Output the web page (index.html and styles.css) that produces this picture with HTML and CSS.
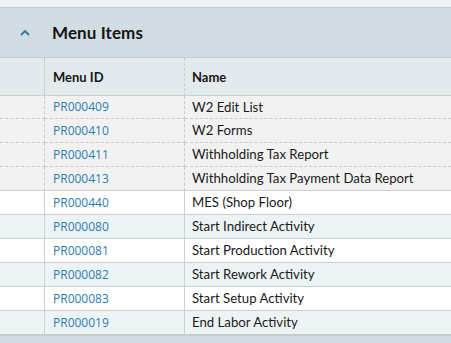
FILE: index.html
```html
<!DOCTYPE html>
<html>
<head>
<meta charset="utf-8">
<link rel="stylesheet" href="styles.css">
</head>
<body>
<div class="topstrip"></div>
<div class="band">
  <svg class="chev" width="12" height="8" viewBox="0 0 12 8"><path d="M2 6 L6 2 L10 6" fill="none" stroke="#2b7aa6" stroke-width="1.8"/></svg>
  <span class="title">Menu Items</span>
</div>
<table class="grid">
  <colgroup><col class="c0"><col class="c1"><col class="c2"></colgroup>
  <thead>
    <tr><th class="sel"></th><th class="idh">Menu ID</th><th class="nameh">Name</th></tr>
  </thead>
  <tbody>
    <tr class="dash first"><td class="sel"></td><td class="id">PR000409</td><td>W2 Edit List</td></tr>
    <tr class="dash"><td class="sel"></td><td class="id">PR000410</td><td>W2 Forms</td></tr>
    <tr class="dash"><td class="sel"></td><td class="id">PR000411</td><td>Withholding Tax Report</td></tr>
    <tr class="dash last"><td class="sel"></td><td class="id">PR000413</td><td>Withholding Tax Payment Data Report</td></tr>
    <tr class="w"><td class="sel"></td><td class="id">PR000440</td><td>MES (Shop Floor)</td></tr>
    <tr class="b"><td class="sel"></td><td class="id">PR000080</td><td>Start Indirect Activity</td></tr>
    <tr class="w"><td class="sel"></td><td class="id">PR000081</td><td>Start Production Activity</td></tr>
    <tr class="b"><td class="sel"></td><td class="id">PR000082</td><td>Start Rework Activity</td></tr>
    <tr class="w"><td class="sel"></td><td class="id">PR000083</td><td>Start Setup Activity</td></tr>
    <tr class="b"><td class="sel"></td><td class="id">PR000019</td><td>End Labor Activity</td></tr>
  </tbody>
</table>
<div class="bottom"></div>
</body>
</html>
```
FILE: styles.css
```css
html, body {
  margin: 0;
  padding: 0;
  background: #d1dde2;
  font-family: Lato, "Noto Sans", sans-serif;
  color: #1b1b1b;
  overflow: hidden;
}
.topstrip {
  height: 7px;
  background: #eef2f5;
  border-bottom: 1px solid #c6cfd3;
}
.band {
  height: 49px;
  background: #d1dde2;
  border-bottom: 1px solid #c3ccd0;
  display: flex;
  align-items: center;
}
.chev {
  margin-left: 19px;
  margin-right: 21px;
  margin-top: 1px;
}
.title {
  font-size: 17px;
  font-weight: 700;
  color: #141414;
  letter-spacing: 0.1px;
}
.grid {
  width: 451px;
  border-collapse: separate;
  border-spacing: 0;
  table-layout: fixed;
  font-size: 13.2px;
}
.c0 { width: 45px; }
.c1 { width: 140px; }
th {
  height: 38px;
  padding: 1px 0 0 8px;
  text-align: left;
  font-weight: 700;
  font-size: 13px;
  background: #e3eaee;
  border-bottom: 1px solid #c8cdd0;
  box-sizing: border-box;
  color: #161616;
}
th.sel { border-right: 1px solid #c8cdd0; padding: 0; }
th.idh { border-right: 1px dashed #c8cdd0; }
th.nameh { padding-left: 7px; }
td {
  padding: 0 0 0 7px;
  line-height: 23px;
  height: 23px;
  white-space: nowrap;
  border-bottom: 1px solid #cdd1d4;
  color: #1a1a1a;
}
td.sel { padding: 0; border-right: 1px solid #cdd1d4; }
td.id {
  padding-left: 8px;
  color: #2a7db3;
  font-family: "Open Sans", "Liberation Sans", sans-serif;
  font-size: 12px;
  border-right: 1px solid #cdd1d4;
}
tr.dash td { background: #f2f2f2; border-bottom: 1px dashed #c9c9c9; }
tr.dash td.sel, tr.dash td.id { border-right: 1px dashed #c9c9c9; }
tr.dash.first td { line-height: 22px; height: 22px; }
tr.dash.last td { border-bottom: 1px solid #cdd1d4; }
tr.w td { background: #ffffff; }
tr.b td { background: #edf4f5; }
tr.b:last-child td { border-bottom: 2px solid #c3ccd0; }
.bottom {
  height: 20px;
  background: #d1dde2;
}
```
